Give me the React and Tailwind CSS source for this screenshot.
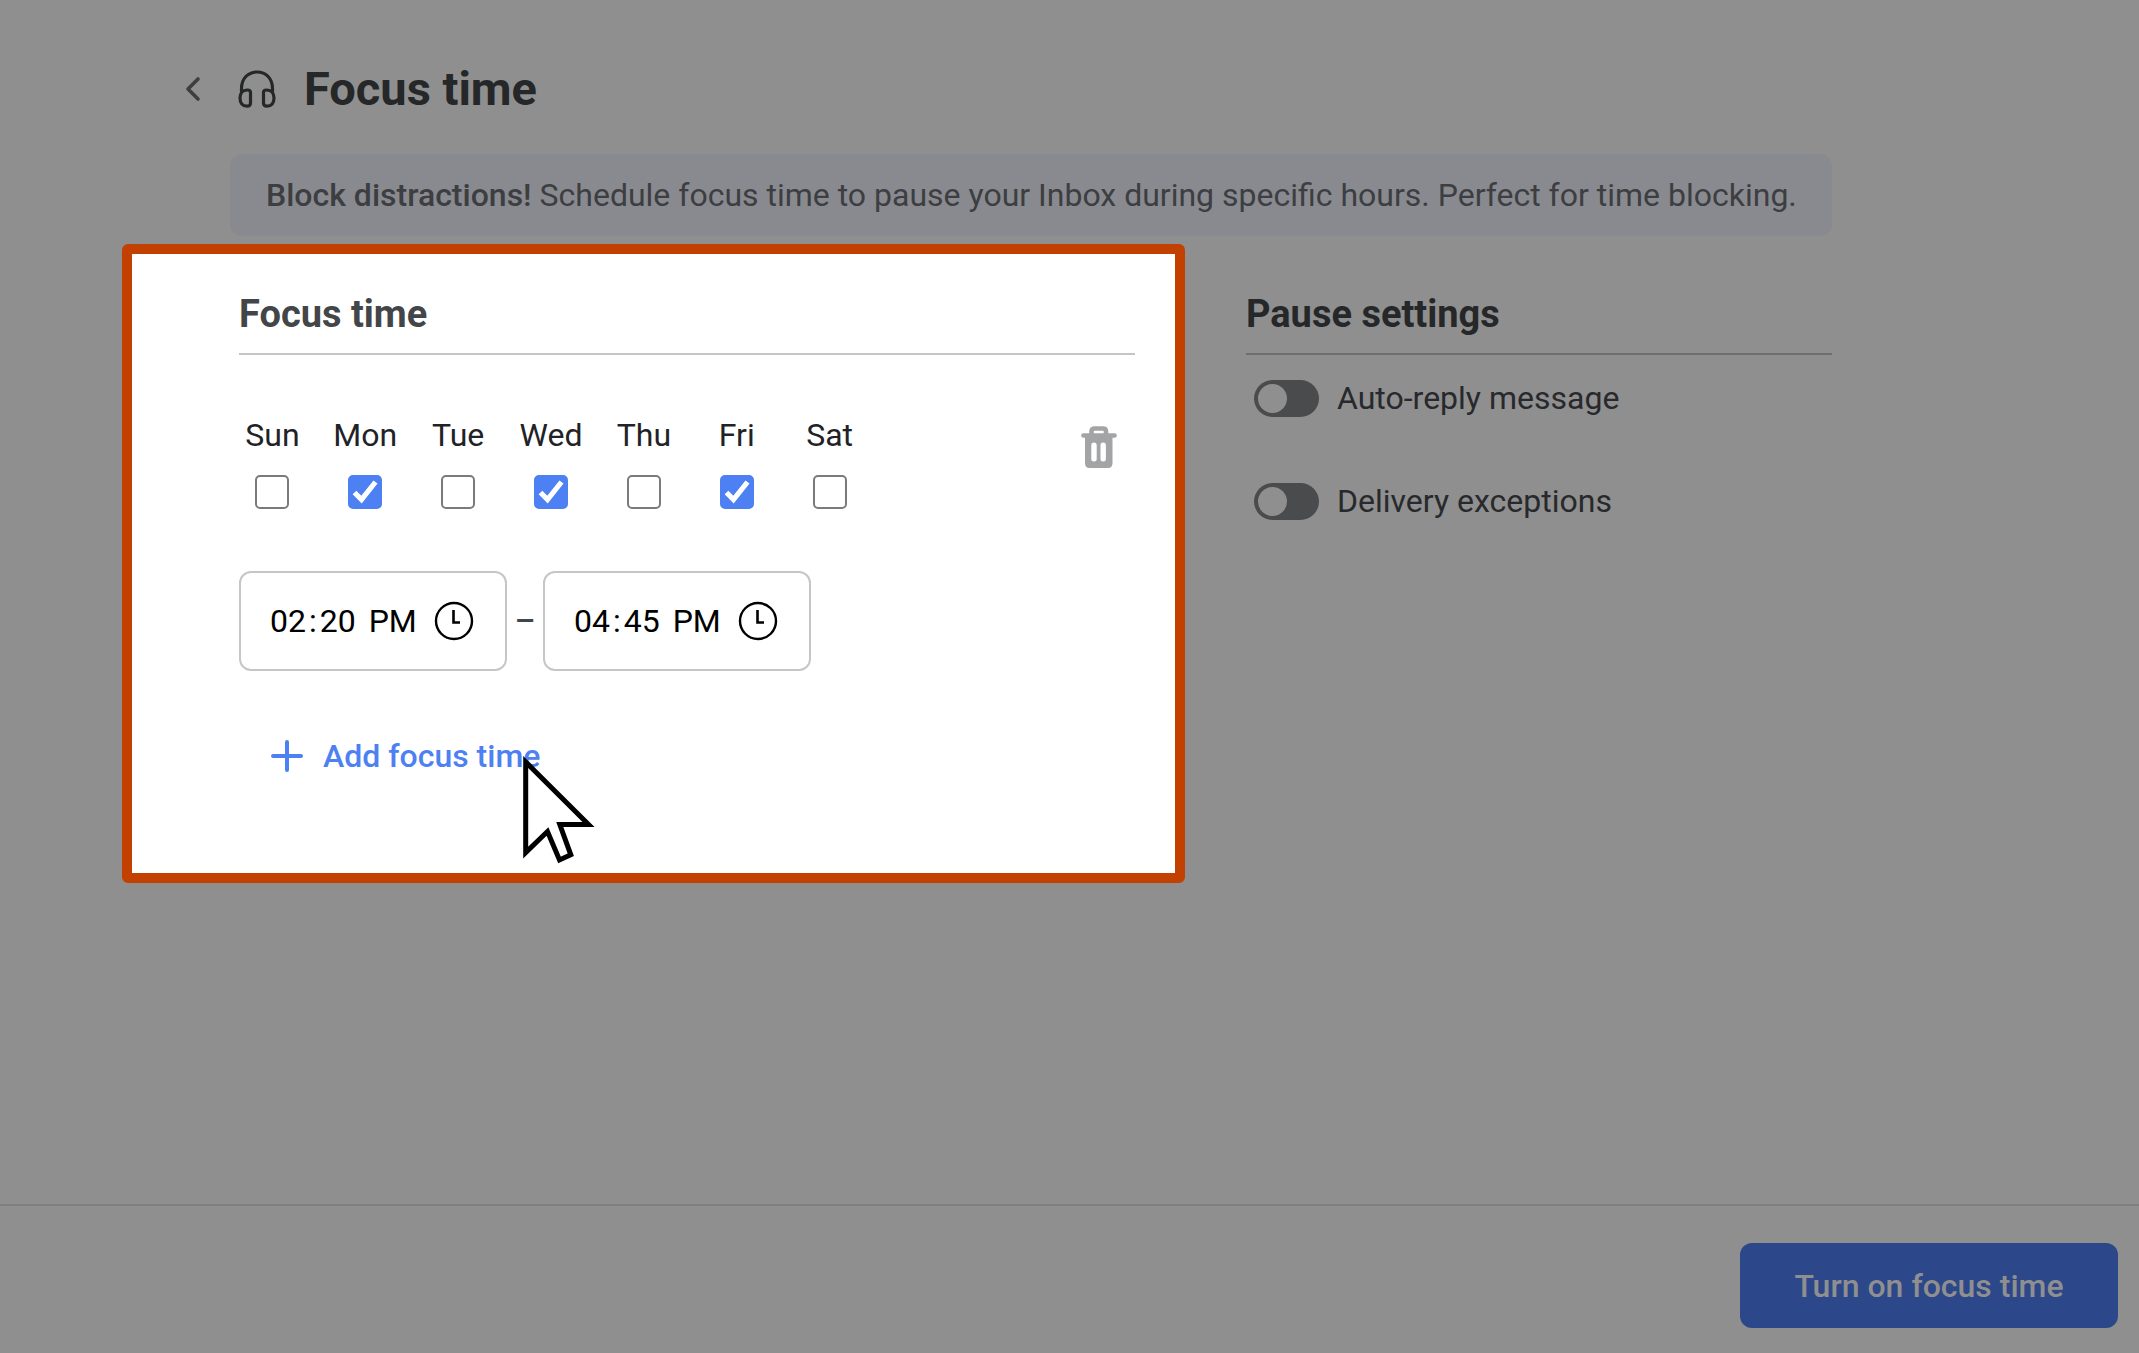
import React from "react";

const days = [
  ["Sun", false],
  ["Mon", true],
  ["Tue", false],
  ["Wed", true],
  ["Thu", false],
  ["Fri", true],
  ["Sat", false],
];

function Day({ name, checked }) {
  return (
    <label className="flex flex-1 flex-col items-center gap-5 leading-10 text-[#1f2327]">
      {name}
      <span className="grid size-[34px]">
        <input
          type="checkbox"
          defaultChecked={checked}
          className="peer col-start-1 row-start-1 size-[34px] appearance-none rounded-[5px] border-2 border-[#7b7b7b] bg-white checked:border-[#4d80f3] checked:bg-[#4d80f3]"
        />
        <svg
          viewBox="0 0 34 34"
          className="pointer-events-none col-start-1 row-start-1 hidden size-[34px] peer-checked:block"
          fill="none"
          stroke="#fff"
          strokeWidth="5.200"
        >
          <path d="M6.500 17.500 L13.500 24.500 L27.500 7" />
        </svg>
      </span>
    </label>
  );
}

function TimeField({ label, value }) {
  return (
    <label className="flex h-[100px] w-[268px] items-center justify-between rounded-xl border-2 border-[#c5c7c7] pr-[31px] pl-[26px] text-black">
      <input
        type="time"
        aria-label={label}
        defaultValue={value}
        className="w-40 bg-transparent outline-none [&::-webkit-calendar-picker-indicator]:hidden [&::-webkit-datetime-edit-ampm-field]:pl-[6px] [&::-webkit-datetime-edit-hour-field]:px-[3px] [&::-webkit-datetime-edit-minute-field]:px-[3px]"
      />
      <svg viewBox="0 0 40 40" className="size-10 shrink-0" fill="none" stroke="#000">
        <circle cx="20" cy="20" r="18" strokeWidth="2.400" />
        <path d="M19.500 9 V21.500 H26" strokeWidth="2.600" />
      </svg>
    </label>
  );
}

function Toggle({ label }) {
  return (
    <label className="flex items-center gap-[18px] leading-10 text-[#27292c]">
      <input
        type="checkbox"
        role="switch"
        className="h-[37px] w-[65px] appearance-none rounded-full bg-[#4a4b4d] p-1 before:block before:size-[29px] before:rounded-full before:bg-[#8f8f8f] before:content-[''] checked:before:ml-auto"
      />
      {label}
    </label>
  );
}

export default function App() {
  return (
    <div className="flex min-h-screen flex-col bg-[#8f8f8f] font-['Roboto',sans-serif] text-[32px]">
      <header className="flex h-[154px] items-start gap-[30px] pt-[55px] pl-[178px] text-[#252729]">
        <button aria-label="Back" className="flex h-[68px] items-center">
          <svg viewBox="0 0 30 30" className="size-[30px]" fill="none" stroke="#3c3e40" strokeWidth="3.600" strokeLinecap="round" strokeLinejoin="round">
            <path d="M20 5 L10 15 L20 25" />
          </svg>
        </button>
        <div className="flex h-[68px] items-center gap-7">
          <svg viewBox="0 0 38 38" className="size-[38px]" fill="none" stroke="#252729" strokeWidth="3.200" strokeLinecap="round" strokeLinejoin="round">
            <path d="M3.500 22 V18.500 C3.500 8.500 10 2 19 2 S34.500 8.500 34.500 18.500 V22" />
            <path d="M12.500 22.500 C12.500 20.500 11.500 20 9.500 20 C4.500 20 2 23.500 2 28 C2 33 4.500 36.200 9 36.200 C11.500 36.200 12.500 35 12.500 33 Z" />
            <path d="M25.500 22.500 C25.500 20.500 26.500 20 28.500 20 C33.500 20 36 23.500 36 28 C36 33 33.500 36.200 29 36.200 C26.500 36.200 25.500 35 25.500 33 Z" />
          </svg>
          <h1 className="text-[47px] font-bold">Focus time</h1>
        </div>
      </header>

      <main className="flex-1">
        <p className="mr-[307px] ml-[230px] rounded-xl bg-[#898a8f] px-9 py-4 leading-[50px] whitespace-nowrap text-[#3c3e41]">
          <b className="font-medium">Block distractions!</b> Schedule focus time to pause your Inbox during specific hours. Perfect for time blocking.
        </p>

        <div className="mt-2 mr-[307px] ml-[122px] grid grid-cols-[1063fr_586fr] gap-[61px]">
          <section className="rounded-md border-10 border-[#c24100] bg-white pt-9 pr-10 pb-[97px] pl-[107px]">
            <h2 className="border-b-2 border-[#c4c6c6] pb-[15px] text-[38px] leading-12 font-bold text-[#434648]">Focus time</h2>
            <div className="mt-[60px] flex justify-between">
              <div role="group" aria-label="Days" className="-ml-[13px] flex w-[650px]">
                {days.map(([name, checked]) => (
                  <Day key={name} name={name} checked={checked} />
                ))}
              </div>
              <button aria-label="Delete focus time" className="mt-[11px] mr-[18px] h-[42px]">
                <svg viewBox="0 0 36 42" className="h-[42px] w-9">
                  <path d="M2.500 9.500 H33.500" stroke="#a3a4a5" strokeWidth="4.600" strokeLinecap="round" />
                  <path d="M10.500 8 V5.500 Q10.500 2.500 13.500 2.500 H22 Q25 2.500 25 5.500 V8" fill="none" stroke="#a3a4a5" strokeWidth="4.600" />
                  <path
                    fillRule="evenodd"
                    fill="#a3a4a5"
                    d="M4 9 H31.500 V37 Q31.500 42 27 42 H8.500 Q4 42 4 37 Z M10.300 19 V33 Q10.300 35.500 13 35.500 T15.700 33 V19 Q15.700 16.500 13 16.500 T10.300 19 Z M19.500 19 V33 Q19.500 35.500 22.200 35.500 T24.900 33 V19 Q24.900 16.500 22.200 16.500 T19.500 19 Z"
                  />
                </svg>
              </button>
            </div>
            <div className="mt-[62px] flex items-center">
              <TimeField label="Start time" value="14:20" />
              <span className="w-9 text-center font-medium text-[#434648]">–</span>
              <TimeField label="End time" value="16:45" />
            </div>
            <div className="relative mt-[65px] w-fit pl-8">
              <button className="flex items-center gap-5 leading-10 font-medium text-[#4d80f3]">
                <svg viewBox="0 0 32 32" className="size-8" stroke="#4d80f3" strokeWidth="4" strokeLinecap="round">
                  <path d="M2 16 H30 M16 2 V30" />
                </svg>
                Add focus time
              </button>
              <svg viewBox="0 0 74 110" className="absolute top-[18px] left-[283px] h-[110px] w-[74px]" fill="#fff" stroke="#000" strokeWidth="5">
                <path d="M3.700 8 V98.500 L25.500 77.500 L37.500 106 L48.800 100.800 L37.800 70.500 H66.500 Z" />
              </svg>
            </div>
          </section>

          <section className="pt-[46px]">
            <h2 className="border-b-2 border-[#6d6e6e] pb-[15px] text-[38px] leading-12 font-bold text-[#252729]">Pause settings</h2>
            <div className="mt-[23px] flex flex-col gap-[63px] pl-2">
              <Toggle label="Auto-reply message" />
              <Toggle label="Delivery exceptions" />
            </div>
          </section>
        </div>
      </main>

      <footer className="flex justify-end border-t-2 border-[#7f7f7f] pt-[37px] pr-[21px] pb-[25px]">
        <button className="h-[85px] w-[378px] rounded-xl bg-[#2c478a] font-medium text-[#8f8f8f]">Turn on focus time</button>
      </footer>
    </div>
  );
}
